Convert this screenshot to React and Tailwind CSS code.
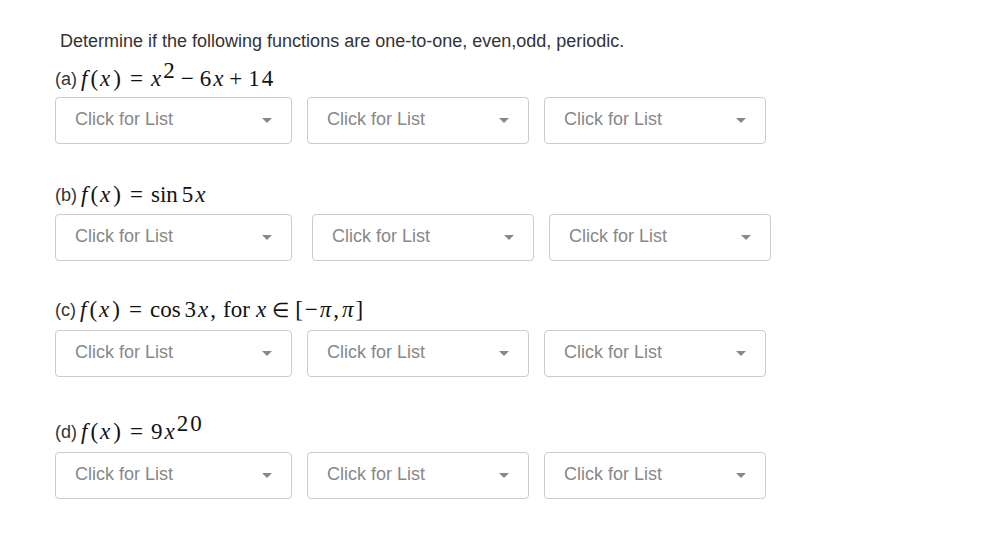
import React from "react";

const sans = { fontFamily: '"Liberation Sans", Arial, sans-serif' };
const serif = { fontFamily: '"Liberation Serif", "Times New Roman", serif' };

function Drop({ w, ml }) {
  return (
    <div
      className={`flex h-[47px] items-center justify-between rounded-[4px] border border-[#cccccc] bg-white pl-[19px] pr-[19px] ${w} ${ml}`}
    >
      <span className="pb-[2px] text-[18px] text-[#888888]" style={sans}>
        Click for List
      </span>
      <span className="h-0 w-0 border-l-[5px] border-r-[5px] border-t-[5px] border-l-transparent border-r-transparent border-t-[#888888]" />
    </div>
  );
}

function V({ children }) {
  return <i>{children}</i>;
}

function W({ children, cls = "" }) {
  return <span className={`tracking-normal ${cls}`}>{children}</span>;
}

function Label({ tag, children, cls }) {
  return (
    <div className={`flex h-[28px] items-center whitespace-nowrap ${cls}`}>
      <span className="mr-[4px] text-[18px] text-[#333333]" style={sans}>
        {tag}
      </span>
      <span className="text-[23px] tracking-[2px] text-[#111111]" style={serif}>
        {children}
      </span>
    </div>
  );
}

function Row({ gaps = ["ml-[15px]", "ml-[15px]"], cls }) {
  return (
    <div className={`flex ${cls}`}>
      <Drop w="w-[237px]" ml="" />
      <Drop w="w-[222px]" ml={gaps[0]} />
      <Drop w="w-[222px]" ml={gaps[1]} />
    </div>
  );
}

const Fx = () => (
  <>
    <i className="mr-[1px]">f</i>(<i className="mr-[1px]">x</i>)
  </>
);
const Eq = () => <span className="ml-[7px] mr-[6px]">=</span>;
const Op = ({ c }) => <span className="mx-[4px]">{c}</span>;
const Sup = ({ children }) => <span className="relative top-[-8px]">{children}</span>;

export default function App() {
  return (
    <div className="h-[540px] w-[995px] bg-white pl-[55px] pt-[31px]">
      <div className="flex h-[20px] items-center pl-[5px] text-[18px] text-[#333333]" style={sans}>
        Determine if the following functions are one-to-one, even,odd, periodic.
      </div>

      <Label tag="(a)" cls="mt-[14px]">
        <Fx />
        <Eq />
        <V>x</V>
        <Sup>2</Sup>
        <Op c="−" />6<V>x</V>
        <Op c="+" />14
      </Label>
      <Row cls="mt-[4px]" />

      <Label tag="(b)" cls="mt-[37px]">
        <Fx />
        <Eq />
        <W>sin</W>
        <span className="ml-[4px]">5</span>
        <V>x</V>
      </Label>
      <Row cls="mt-[5px]" gaps={["ml-[20px]", "ml-[15px]"]} />

      <Label tag="(c)" cls="mt-[35px]">
        <Fx />
        <Eq />
        <W>cos</W>
        <span className="ml-[4px]">3</span>
        <V>x</V>,<W cls="ml-[5px]">for</W>
        <span className="ml-[6px]"><V>x</V></span>
        <span className="ml-[4px] mr-[4px] text-[20px]">∈</span>[−<V>π</V>,<span className="ml-[1px]"><V>π</V></span>]
      </Label>
      <Row cls="mt-[6px]" />

      <Label tag="(d)" cls="mt-[41px]">
        <Fx />
        <Eq />
        9<V>x</V>
        <Sup>20</Sup>
      </Label>
      <Row cls="mt-[6px]" />
    </div>
  );
}
